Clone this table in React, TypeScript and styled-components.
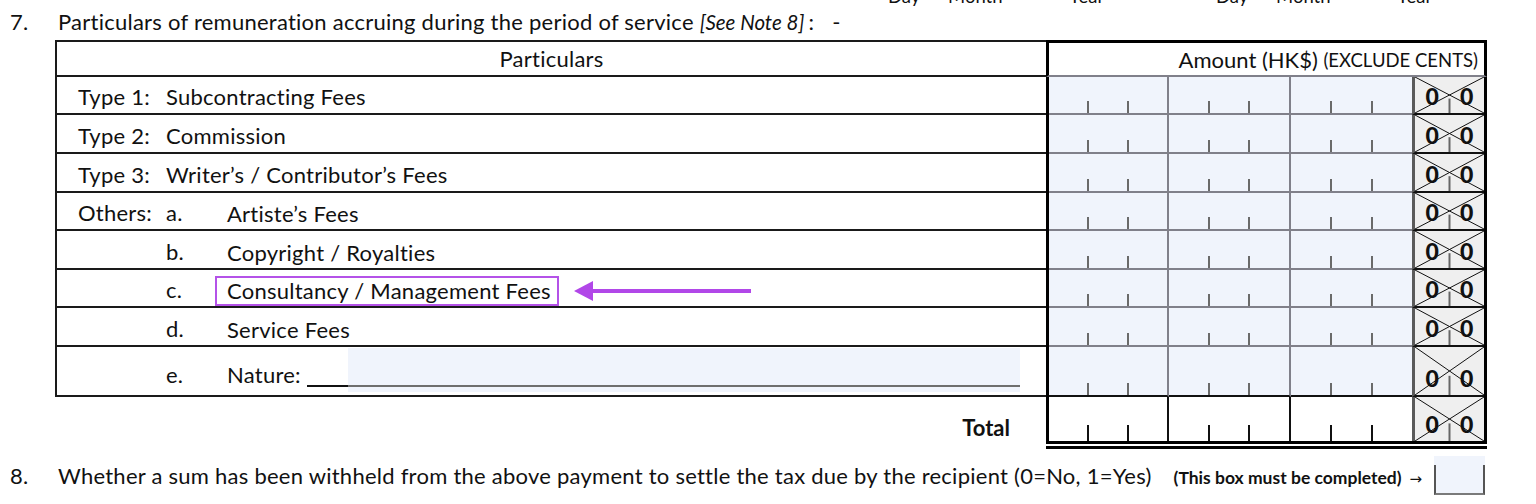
import React from 'react';
import styled, { createGlobalStyle } from 'styled-components';

const BLUE = '#f0f4fc';
const GRAY = '#80808a';
const INK = '#1a1a1a';
const FONT = 'Lato, "Open Sans", "Liberation Sans", sans-serif';

const Global = createGlobalStyle`
  html, body { margin: 0; padding: 0; background: #ffffff; }
  body { font-family: ${FONT}; color: #111; }
`;

const Page = styled.div`
  width: 1536px;
  height: 504px;
  overflow: hidden;
  font-family: ${FONT};
  font-size: 22px;
  letter-spacing: 0.25px;
`;

const DateStrip = styled.div`
  margin-top: -11px;
  height: 15px;
  padding-left: 888px;
  display: grid;
  grid-template-columns: 60px 121px 147px 60px 121px auto;
  font-size: 18.5px;
  line-height: 15px;
  letter-spacing: 0;
  color: #111;
`;

const Heading = styled.div`
  margin-top: 6px;
  height: 24px;
  display: flex;
  align-items: center;
  line-height: 24px;
`;

const Num = styled.span`
  width: 48px;
  padding-left: 10px;
  flex: none;
`;

const Note = styled.i`
  font-size: 20.5px;
  letter-spacing: 0;
`;

const Colon = styled.span`
  margin-left: 4px;
`;

const Dash = styled.span`
  margin-left: 18px;
`;

const Table = styled.div`
  margin-top: 6px;
  margin-left: 55px;
  display: flex;
  flex-direction: column;
  width: 1432px;
`;

const Row = styled.div<{ $h: number }>`
  display: flex;
  height: ${(p) => p.$h}px;
`;

const Part = styled.div<{ $top?: boolean; $center?: boolean }>`
  box-sizing: border-box;
  width: 991px;
  flex: none;
  border-left: 2px solid ${INK};
  border-bottom: 2px solid ${INK};
  ${(p) => (p.$top ? `border-top: 2px solid ${INK};` : '')}
  display: flex;
  align-items: flex-end;
  justify-content: ${(p) => (p.$center ? 'center' : 'flex-start')};
  padding-left: ${(p) => (p.$center ? 0 : 21)}px;
  padding-bottom: 1px;
  line-height: 30px;
  white-space: nowrap;
`;

const TotalLabel = styled.div`
  box-sizing: border-box;
  width: 991px;
  flex: none;
  display: flex;
  align-items: flex-end;
  justify-content: flex-end;
  padding-right: 36px;
  padding-bottom: 1px;
  font-weight: 700;
  letter-spacing: 0;
  line-height: 30px;
`;

const Label1 = styled.span`
  width: 88px;
  flex: none;
`;

const Letter = styled.span<{ $lift?: number }>`
  width: 49px;
  flex: none;
  margin-bottom: ${(p) => p.$lift ?? 0}px;
`;

const TextBox = styled.span<{ $hl?: boolean }>`
  box-sizing: border-box;
  height: 30px;
  display: flex;
  align-items: center;
  padding: 0 6px 0 10px;
  margin-bottom: -1px;
  border: 2px solid ${(p) => (p.$hl ? '#b452e8' : 'transparent')};
`;

const PointArrow = styled.svg`
  width: 180px;
  height: 22px;
  margin-left: 14px;
  margin-bottom: 3px;
  flex: none;
`;

const NatureText = styled.span`
  padding-left: 12px;
  margin-right: 6px;
  margin-bottom: 4px;
`;

const Blank = styled.span`
  width: 41px;
  height: 20px;
  margin-bottom: 7px;
  border-bottom: 2px solid #111;
  flex: none;
`;

const Field = styled.span`
  width: 672px;
  height: 44px;
  margin-bottom: 2px;
  flex: none;
  background: linear-gradient(#6e6e6e, #6e6e6e) left calc(100% - 5px) / 100% 2px no-repeat, ${BLUE};
`;

const Amount = styled.div<{ $top?: boolean; $total?: boolean }>`
  box-sizing: border-box;
  width: 441px;
  flex: none;
  display: flex;
  border-left: 3px solid #000;
  border-right: 3px solid #000;
  ${(p) => (p.$top ? 'border-top: 3px solid #000;' : '')}
  ${(p) => (p.$total ? 'border-bottom: 3px solid #000;' : '')}
`;

const AmountHead = styled(Amount)`
  justify-content: flex-end;
  align-items: flex-end;
  padding-right: 6px;
  border-bottom: 2px solid ${GRAY};
  line-height: 30px;
  white-space: nowrap;
  letter-spacing: 0;
`;

const Small = styled.span`
  font-size: 18.5px;
`;

const Group = styled.div<{ $w: number; $total?: boolean; $last?: boolean; $end?: boolean }>`
  box-sizing: border-box;
  width: ${(p) => p.$w}px;
  flex: none;
  height: 100%;
  background: ${(p) => (p.$total ? '#ffffff' : BLUE)};
  border-right: ${(p) => (p.$end ? 'none' : `2px solid ${p.$total ? '#111' : GRAY}`)};
  border-bottom: ${(p) => (p.$total ? 'none' : `2px solid ${p.$last ? '#111' : GRAY}`)};
  display: flex;
  align-items: flex-end;
`;

const Seg = styled.div<{ $h: number; $c: string; $tick: boolean }>`
  flex: 1;
  height: ${(p) => p.$h}px;
  border-right: ${(p) => (p.$tick ? `2px solid ${p.$c}` : 'none')};
`;

const Cents = styled.div<{ $total?: boolean }>`
  position: relative;
  box-sizing: border-box;
  width: 72px;
  flex: none;
  height: 100%;
  background: #efefef;
  border-left: 3px solid #5a5a5a;
  border-bottom: ${(p) => (p.$total ? 'none' : '2px solid #111')};
  display: flex;
  align-items: flex-end;
`;

const CentsArt = styled.svg`
  position: absolute;
  left: 0;
  top: 0;
  width: 100%;
  height: 100%;
`;

const Digit = styled.span`
  position: relative;
  flex: 1;
  text-align: center;
  font-weight: 900;
  font-size: 23px;
  letter-spacing: 0;
  line-height: 30px;
  padding-bottom: 2px;
`;

const DoubleLine = styled.div`
  margin-left: 991px;
  margin-top: 2px;
  width: 441px;
  height: 3px;
  background: #000;
`;

const Sec8 = styled.div`
  margin-top: 7px;
  display: flex;
  align-items: flex-end;
`;

const Sec8Line = styled.div`
  display: flex;
  align-items: baseline;
  line-height: 24px;
  margin-bottom: 4px;
  white-space: nowrap;
`;

const Must = styled.span`
  margin-left: 22px;
  font-size: 17.5px;
  font-weight: 700;
  letter-spacing: 0;
`;

const Arrow = styled.span`
  margin-left: 8px;
  font-family: "DejaVu Sans", sans-serif;
  font-size: 15px;
  letter-spacing: 0;
`;

const YesBox = styled.div`
  margin-left: 12px;
  width: 51px;
  height: 39px;
  flex: none;
  background: ${BLUE};
  display: flex;
  align-items: flex-end;
`;

const YesFrame = styled.div`
  box-sizing: border-box;
  width: 100%;
  height: 30px;
  border-left: 2px solid #555;
  border-right: 2px solid #555;
  border-bottom: 2px solid #7a7a7a;
`;

const GROUPS = [120, 122, 121];

function Ticks({ h, c }: { h: number; c: string }) {
  return (
    <>
      <Seg $h={h} $c={c} $tick />
      <Seg $h={h} $c={c} $tick />
      <Seg $h={h} $c={c} $tick={false} />
    </>
  );
}

function CentsCell({ total }: { total?: boolean }) {
  return (
    <Cents $total={total}>
      <CentsArt>
        <line x1="0" y1="0" x2="100%" y2="100%" stroke="#111" strokeWidth="1" />
        <line x1="100%" y1="0" x2="0" y2="100%" stroke="#111" strokeWidth="1" />
        <line x1="50%" y1="60%" x2="50%" y2="100%" stroke="#666" strokeWidth="2" />
      </CentsArt>
      <Digit>0</Digit>
      <Digit>0</Digit>
    </Cents>
  );
}

function AmountCells({ last }: { last?: boolean }) {
  return (
    <Amount>
      {GROUPS.map((w, i) => (
        <Group key={i} $w={w} $last={last} $end={i === 2}>
          <Ticks h={12} c="#6a6a6a" />
        </Group>
      ))}
      <CentsCell />
    </Amount>
  );
}

type Item =
  | { kind: 'type'; a: string; b: string; h: number }
  | { kind: 'sub'; a: string; l: string; t: string; h: number; hl?: boolean };

const ITEMS: Item[] = [
  { kind: 'type', a: 'Type 1:', b: 'Subcontracting Fees', h: 38 },
  { kind: 'type', a: 'Type 2:', b: 'Commission', h: 39 },
  { kind: 'type', a: 'Type 3:', b: 'Writer’s / Contributor’s Fees', h: 39 },
  { kind: 'sub', a: 'Others:', l: 'a.', t: 'Artiste’s Fees', h: 38 },
  { kind: 'sub', a: '', l: 'b.', t: 'Copyright / Royalties', h: 39 },
  { kind: 'sub', a: '', l: 'c.', t: 'Consultancy / Management Fees', h: 38, hl: true },
  { kind: 'sub', a: '', l: 'd.', t: 'Service Fees', h: 39 },
];

export default function App() {
  return (
    <Page>
      <Global />
      <DateStrip>
        <span>Day</span>
        <span>Month</span>
        <span>Year</span>
        <span>Day</span>
        <span>Month</span>
        <span>Year</span>
      </DateStrip>
      <Heading>
        <Num>7.</Num>
        <span>
          Particulars of remuneration accruing during the period of service <Note>[See Note 8]</Note>
          <Colon>:</Colon>
          <Dash>-</Dash>
        </span>
      </Heading>
      <Table>
        <Row $h={37}>
          <Part $top $center>
            Particulars
          </Part>
          <AmountHead $top>
            Amount (HK$)&nbsp;<Small>(EXCLUDE CENTS)</Small>
          </AmountHead>
        </Row>
        {ITEMS.map((it, i) => (
          <Row key={i} $h={it.h}>
            <Part>
              <Label1>{it.a}</Label1>
              {it.kind === 'type' ? (
                <span>{it.b}</span>
              ) : (
                <>
                  <Letter>{it.l}</Letter>
                  <TextBox $hl={it.hl}>{it.t}</TextBox>
                  {it.hl && (
                    <PointArrow viewBox="0 0 180 22">
                      <polygon points="1,11 20,1 20,21" fill="#b147e8" />
                      <rect x="18" y="9" width="160" height="4" fill="#b147e8" />
                    </PointArrow>
                  )}
                </>
              )}
            </Part>
            <AmountCells />
          </Row>
        ))}
        <Row $h={50}>
          <Part>
            <Label1 />
            <Letter $lift={4}>e.</Letter>
            <NatureText>Nature:</NatureText>
            <Blank />
            <Field />
          </Part>
          <AmountCells last />
        </Row>
        <Row $h={47}>
          <TotalLabel>Total</TotalLabel>
          <Amount $total>
            {GROUPS.map((w, i) => (
              <Group key={i} $w={w} $total $end={i === 2}>
                <Ticks h={16} c="#111" />
              </Group>
            ))}
            <CentsCell total />
          </Amount>
        </Row>
        <DoubleLine />
      </Table>
      <Sec8>
        <Sec8Line>
          <Num>8.</Num>
          <span>
            Whether a sum has been withheld from the above payment to settle the tax due by the recipient (0=No, 1=Yes)
          </span>
          <Must>(This box must be completed)</Must>
          <Arrow>→</Arrow>
        </Sec8Line>
        <YesBox>
          <YesFrame />
        </YesBox>
      </Sec8>
    </Page>
  );
}
